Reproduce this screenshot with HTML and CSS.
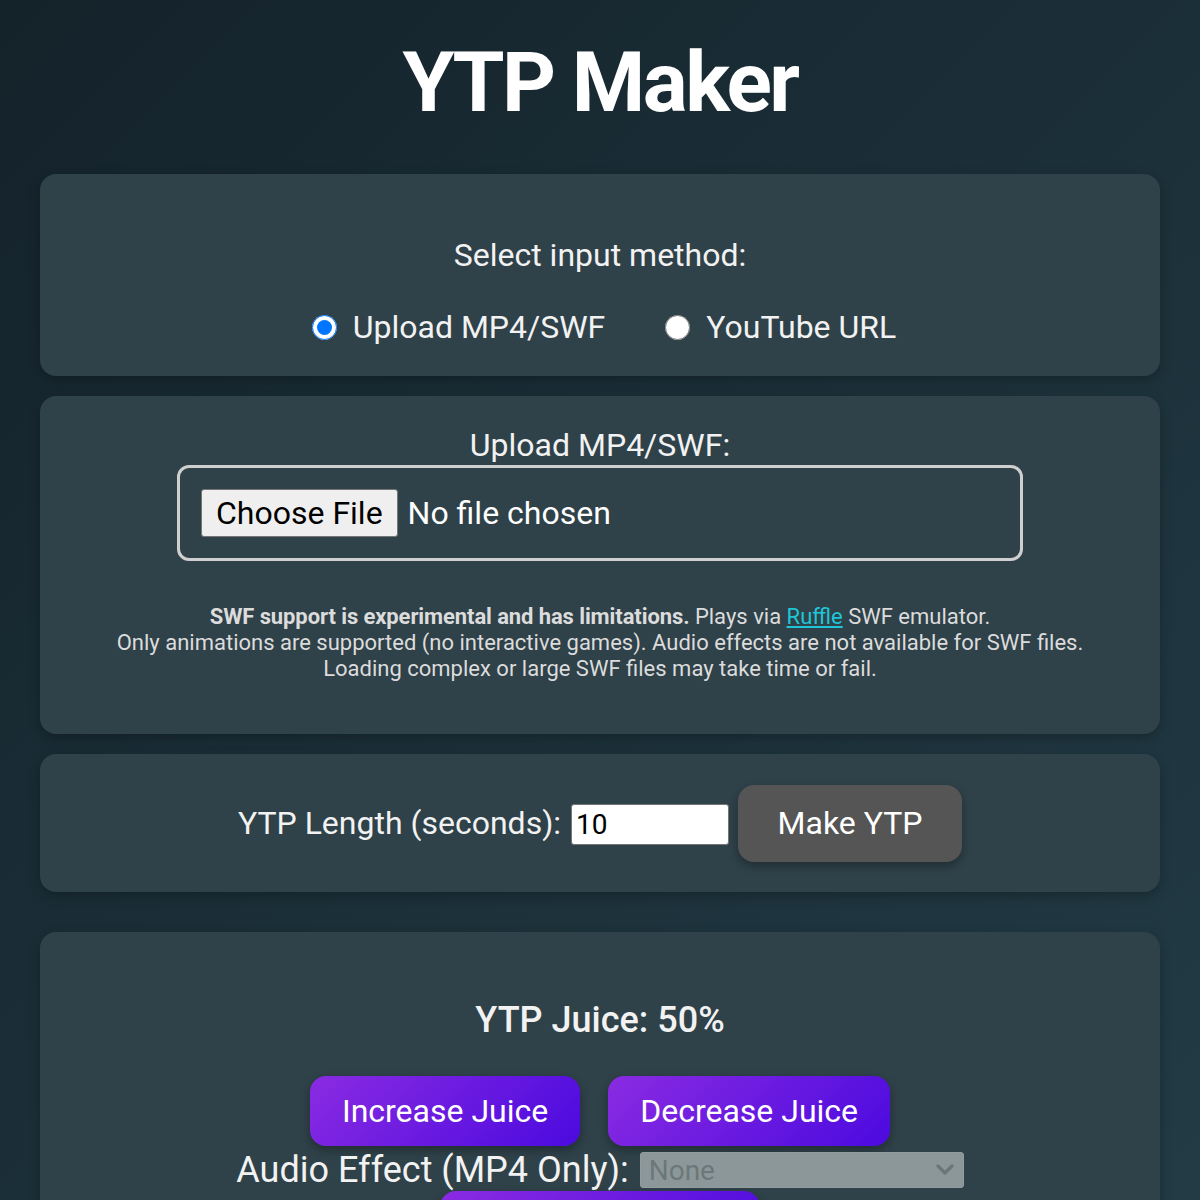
FILE: index.html
```html
<!DOCTYPE html>
<html>
<head>
<meta charset="utf-8">
<link rel="stylesheet" href="styles.css">
</head>
<body>
<h1 class="title">YTP Maker</h1>

<section class="card card-method">
  <p class="label">Select input method:</p>
  <div class="radios">
    <label class="radio"><input type="radio" name="m" checked> Upload MP4/SWF</label>
    <label class="radio"><input type="radio" name="m"> YouTube URL</label>
  </div>
</section>

<section class="card card-upload">
  <p class="label upload-label">Upload MP4/SWF:</p>
  <div class="file-box"><input type="file" class="file"></div>
  <p class="note"><strong>SWF support is experimental and has limitations.</strong> Plays via <a href="#">Ruffle</a> SWF emulator.<br>Only animations are supported (no interactive games). Audio effects are not available for SWF files.<br>Loading complex or large SWF files may take time or fail.</p>
</section>

<section class="card card-length">
  <label class="len-label">YTP Length (seconds):</label>
  <input class="len-input" type="text" value="10">
  <button class="make">Make YTP</button>
</section>

<section class="card card-juice">
  <p class="juice">YTP Juice: 50%</p>
  <div class="juice-btns">
    <button class="purple">Increase Juice</button>
    <button class="purple">Decrease Juice</button>
  </div>
  <div class="audio">
    <label class="audio-label">Audio Effect (MP4 Only):</label>
    <div class="select-wrap">
      <select class="audio-select" disabled><option>None</option></select>
      <svg class="chev" width="18" height="12" viewBox="0 0 18 12"><path d="M2 2 L9 9 L16 2" fill="none" stroke="#6b7678" stroke-width="3.2" stroke-linecap="round" stroke-linejoin="round"/></svg>
    </div>
  </div>
  <div class="more"><button class="purple wide">Apply Effect</button></div>
</section>
</body>
</html>
```

FILE: styles.css
```css
html, body { height: 100%; }
body {
  margin: 0;
  padding: 0 40px;
  font-family: Roboto, "Liberation Sans", sans-serif;
  color: #f2f2f2;
  background: linear-gradient(135deg, #14222a 0%, #1b2f38 50%, #223b45 100%);
  background-attachment: fixed;
  overflow: hidden;
}
.title {
  margin: 0;
  padding-top: 38px;
  height: 174px;
  box-sizing: border-box;
  text-align: center;
  font-size: 84px;
  font-weight: 700;
  letter-spacing: -2.6px;
  color: #fff;
  line-height: 90px;
}
.card {
  background: #2f4149;
  border-radius: 16px;
  box-shadow: 0 4px 12px rgba(0,0,0,0.25);
  margin-bottom: 20px;
  text-align: center;
}
.card-method { height: 202px; padding-top: 62px; box-sizing: border-box; }
.label { margin: 0; font-size: 32px; line-height: 38px; }
.radios {
  display: flex;
  justify-content: center;
  gap: 60px;
  margin-top: 34px;
  padding-left: 8px;
  font-size: 32px;
  line-height: 38px;
}
.radio { display: flex; align-items: center; gap: 16px; }
.radio input { width: 25px; height: 25px; margin: 0; }

.card-upload { height: 338px; padding-top: 30px; box-sizing: border-box; }
.upload-label { line-height: 38px; }
.file-box {
  width: 846px;
  height: 96px;
  box-sizing: border-box;
  margin: 1px auto 0;
  border: 3px solid #cfcfcf;
  border-radius: 12px;
  display: flex;
  align-items: center;
  padding-left: 21px;
}
.file { font-family: Roboto, sans-serif; font-size: 32px; color: #fff; }
.file::file-selector-button {
  font-family: Roboto, sans-serif;
  font-size: 32px;
  height: 48px;
  padding: 0 14px;
  margin-right: 10px;
  background: #efefef;
  border: 1px solid #767676;
  border-radius: 3px;
  color: #000;
}
.note {
  margin: 43px 0 0;
  font-size: 22px;
  line-height: 26px;
  color: #dcdcdc;
}
.note strong { font-weight: 700; letter-spacing: -0.1px; }
.note a { color: #1ec6d8; }

.card-length {
  height: 138px;
  display: flex;
  justify-content: center;
  align-items: center;
  box-sizing: border-box;
}
.len-label { font-size: 32px; margin-right: 10px; }
.len-input {
  width: 158px;
  height: 41px;
  box-sizing: border-box;
  font-family: Roboto, sans-serif;
  font-size: 28px;
  padding: 0 4px;
  border: 1px solid #767676;
  border-radius: 3px;
  margin-right: 9px;
  margin-top: 2px;
}
.make {
  width: 224px;
  height: 77px;
  border: none;
  border-radius: 16px;
  background: #555555;
  color: #fff;
  font-family: Roboto, sans-serif;
  font-size: 32px;
  box-shadow: 0 4px 10px rgba(0,0,0,0.3);
}

.card-juice { margin-top: 40px; padding-top: 65px; height: 400px; box-sizing: border-box; }
.juice { margin: 0; font-size: 36px; font-weight: 500; line-height: 46px; }
.juice-btns { display: flex; justify-content: center; gap: 28px; margin-top: 33px; }
.purple {
  height: 70px;
  padding: 0 32px;
  border: none;
  border-radius: 16px;
  background: linear-gradient(135deg, #8a2be2 0%, #4b0adf 100%);
  color: #fff;
  font-family: Roboto, sans-serif;
  font-size: 32px;
  box-shadow: 0 4px 10px rgba(0,0,0,0.3);
}
.audio { display: flex; justify-content: center; align-items: center; margin-top: 4px; gap: 11px; height: 40px; }
.audio-label { font-size: 36px; line-height: 40px; }
.select-wrap { position: relative; width: 324px; height: 36px; }
.audio-select {
  appearance: none;
  width: 100%;
  height: 100%;
  font-family: Roboto, sans-serif;
  font-size: 28px;
  padding: 0 8px;
  background: #8c9799;
  color: #6c7779;
  border: 1px solid #929c9e;
  border-radius: 3px;
  opacity: 1;
}
.chev { position: absolute; right: 10px; top: 12px; }
.more { display: flex; justify-content: center; margin-top: 1px; }
.wide { width: 320px; padding-top: 20px; }
```
